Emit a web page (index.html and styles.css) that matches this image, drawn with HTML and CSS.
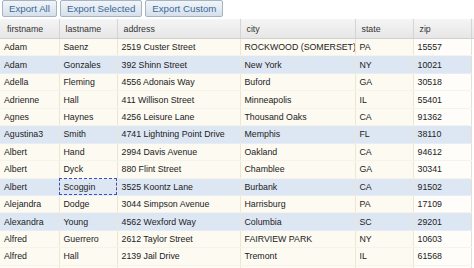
FILE: index.html
```html
<!DOCTYPE html>
<html>
<head>
<meta charset="utf-8">
<link rel="stylesheet" href="styles.css">
</head>
<body>
<div class="toolbar">
  <button class="btn">Export All</button>
  <button class="btn">Export Selected</button>
  <button class="btn">Export Custom</button>
</div>
<table class="grid">
  <colgroup>
    <col class="c1"><col class="c2"><col class="c3"><col class="c4"><col class="c5"><col class="c6"><col class="c7">
  </colgroup>
  <thead>
    <tr><th>firstname</th><th>lastname</th><th>address</th><th>city</th><th>state</th><th>zip</th><th class="fill"></th></tr>
  </thead>
  <tbody>
    <tr><td>Adam</td><td>Saenz</td><td>2519 Custer Street</td><td>ROCKWOOD (SOMERSET)</td><td>PA</td><td class="z">15557</td><td class="fill"></td></tr>
    <tr class="sel"><td>Adam</td><td>Gonzales</td><td>392 Shinn Street</td><td>New York</td><td>NY</td><td class="z">10021</td><td class="fill"></td></tr>
    <tr><td>Adella</td><td>Fleming</td><td>4556 Adonais Way</td><td>Buford</td><td>GA</td><td class="z">30518</td><td class="fill"></td></tr>
    <tr><td>Adrienne</td><td>Hall</td><td>411 Willison Street</td><td>Minneapolis</td><td>IL</td><td class="z">55401</td><td class="fill"></td></tr>
    <tr><td>Agnes</td><td>Haynes</td><td>4256 Leisure Lane</td><td>Thousand Oaks</td><td>CA</td><td class="z">91362</td><td class="fill"></td></tr>
    <tr class="sel"><td>Agustina3</td><td>Smith</td><td>4741 Lightning Point Drive</td><td>Memphis</td><td>FL</td><td class="z">38110</td><td class="fill"></td></tr>
    <tr><td>Albert</td><td>Hand</td><td>2994 Davis Avenue</td><td>Oakland</td><td>CA</td><td class="z">94612</td><td class="fill"></td></tr>
    <tr><td>Albert</td><td>Dyck</td><td>880 Flint Street</td><td>Chamblee</td><td>GA</td><td class="z">30341</td><td class="fill"></td></tr>
    <tr class="sel"><td>Albert</td><td class="focus">Scoggin</td><td>3525 Koontz Lane</td><td>Burbank</td><td>CA</td><td class="z">91502</td><td class="fill"></td></tr>
    <tr><td>Alejandra</td><td>Dodge</td><td>3044 Simpson Avenue</td><td>Harrisburg</td><td>PA</td><td class="z">17109</td><td class="fill"></td></tr>
    <tr class="sel"><td>Alexandra</td><td>Young</td><td>4562 Wexford Way</td><td>Columbia</td><td>SC</td><td class="z">29201</td><td class="fill"></td></tr>
    <tr><td>Alfred</td><td>Guerrero</td><td>2612 Taylor Street</td><td>FAIRVIEW PARK</td><td>NY</td><td class="z">10603</td><td class="fill"></td></tr>
    <tr><td>Alfred</td><td>Hall</td><td>2139 Jail Drive</td><td>Tremont</td><td>IL</td><td class="z">61568</td><td class="fill"></td></tr>
    <tr><td></td><td></td><td></td><td></td><td></td><td class="z"></td><td class="fill"></td></tr>
  </tbody>
</table>
</body>
</html>
```
FILE: styles.css
```css
html, body {
  margin: 0;
  padding: 0;
  background: #ffffff;
  overflow: hidden;
}
body {
  font-family: "Liberation Sans", Arial, sans-serif;
  width: 474px;
  height: 268px;
}
.toolbar {
  display: flex;
  gap: 3px;
  padding-left: 2px;
  height: 19px;
  align-items: flex-start;
}
.btn {
  height: 17px;
  margin: 0;
  padding: 0 6px;
  border: 1px solid #a6b3c2;
  border-radius: 2px;
  background: linear-gradient(#f1f5f9, #d6e0eb);
  color: #3c6898;
  font-family: "Liberation Sans", Arial, sans-serif;
  font-size: 9.7px;
  line-height: 15px;
}
.grid {
  border-collapse: collapse;
  table-layout: fixed;
  width: 474px;
  font-size: 8.8px;
}
.c1 { width: 59px; }
.c2 { width: 58px; }
.c3 { width: 123px; }
.c4 { width: 115px; }
.c5 { width: 58px; }
.c6 { width: 58px; }
.c7 { width: 3px; }
th {
  height: 19px;
  padding: 0 0 0 6px;
  text-align: left;
  font-weight: normal;
  color: #333333;
  background: linear-gradient(#f5f5f5, #e6e6e6);
  border-right: 1px solid #d4d4d4;
  border-bottom: 1px solid #d0d0d0;
  white-space: nowrap;
  overflow: hidden;
}
th:first-child { padding-left: 7px; }
th.fill { padding: 0; border-right: none; }
td {
  height: 16.45px;
  padding: 0 0 0 4px;
  color: #222222;
  background: #fcfaf1;
  border-right: 1px solid #ebe6d6;
  border-bottom: 1px solid #f6f3ea;
  white-space: nowrap;
  overflow: hidden;
}
td.z {
  background: #fefdf9;
  border-right: 1px solid #e2dfd6;
}
td.fill {
  padding: 0;
  background: #ffffff;
  border-right: none;
  border-bottom: none;
}
tr.sel td {
  background: #dde7f4;
  border-bottom-color: #e6edf7;
}
tr.sel td.fill { background: #ffffff; }
td.focus {
  outline: 1px dashed #3b4fc4;
  outline-offset: -1px;
}
```
